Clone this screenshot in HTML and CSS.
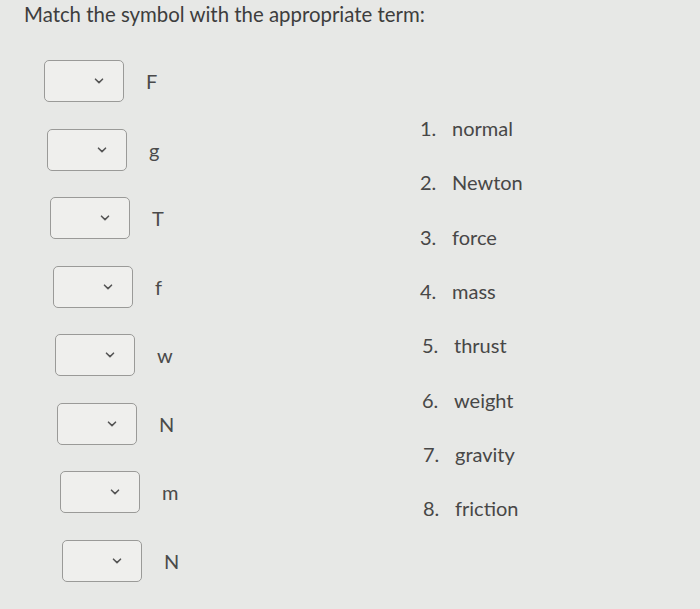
FILE: index.html
```html
<!DOCTYPE html>
<html>
<head>
<meta charset="utf-8">
<link rel="stylesheet" href="styles.css">
</head>
<body>
<div class="page">
  <h1 class="title">Match the symbol with the appropriate term:</h1>
  <div class="match">
    <div class="symbols">
      <div class="row"><div class="select"><svg class="chev" viewBox="0 0 10 6" width="10" height="6"><path d="M1.5 1.2 L5 4.6 L8.5 1.2" fill="none" stroke="#555" stroke-width="1.6" stroke-linecap="round" stroke-linejoin="round"/></svg></div><span class="sym">F</span></div>
      <div class="row"><div class="select"><svg class="chev" viewBox="0 0 10 6" width="10" height="6"><path d="M1.5 1.2 L5 4.6 L8.5 1.2" fill="none" stroke="#555" stroke-width="1.6" stroke-linecap="round" stroke-linejoin="round"/></svg></div><span class="sym">g</span></div>
      <div class="row"><div class="select"><svg class="chev" viewBox="0 0 10 6" width="10" height="6"><path d="M1.5 1.2 L5 4.6 L8.5 1.2" fill="none" stroke="#555" stroke-width="1.6" stroke-linecap="round" stroke-linejoin="round"/></svg></div><span class="sym">T</span></div>
      <div class="row"><div class="select"><svg class="chev" viewBox="0 0 10 6" width="10" height="6"><path d="M1.5 1.2 L5 4.6 L8.5 1.2" fill="none" stroke="#555" stroke-width="1.6" stroke-linecap="round" stroke-linejoin="round"/></svg></div><span class="sym">f</span></div>
      <div class="row"><div class="select"><svg class="chev" viewBox="0 0 10 6" width="10" height="6"><path d="M1.5 1.2 L5 4.6 L8.5 1.2" fill="none" stroke="#555" stroke-width="1.6" stroke-linecap="round" stroke-linejoin="round"/></svg></div><span class="sym">w</span></div>
      <div class="row"><div class="select"><svg class="chev" viewBox="0 0 10 6" width="10" height="6"><path d="M1.5 1.2 L5 4.6 L8.5 1.2" fill="none" stroke="#555" stroke-width="1.6" stroke-linecap="round" stroke-linejoin="round"/></svg></div><span class="sym">N</span></div>
      <div class="row"><div class="select"><svg class="chev" viewBox="0 0 10 6" width="10" height="6"><path d="M1.5 1.2 L5 4.6 L8.5 1.2" fill="none" stroke="#555" stroke-width="1.6" stroke-linecap="round" stroke-linejoin="round"/></svg></div><span class="sym">m</span></div>
      <div class="row"><div class="select"><svg class="chev" viewBox="0 0 10 6" width="10" height="6"><path d="M1.5 1.2 L5 4.6 L8.5 1.2" fill="none" stroke="#555" stroke-width="1.6" stroke-linecap="round" stroke-linejoin="round"/></svg></div><span class="sym">N</span></div>
    </div>
    <ol class="terms">
      <li><span class="num">1.</span><span>normal</span></li>
      <li><span class="num">2.</span><span>Newton</span></li>
      <li><span class="num">3.</span><span>force</span></li>
      <li><span class="num">4.</span><span>mass</span></li>
      <li><span class="num">5.</span><span>thrust</span></li>
      <li><span class="num">6.</span><span>weight</span></li>
      <li><span class="num">7.</span><span>gravity</span></li>
      <li><span class="num">8.</span><span>friction</span></li>
    </ol>
  </div>
</div>
</body>
</html>
```

FILE: styles.css
```css
html, body {
  margin: 0;
  padding: 0;
}
body {
  width: 700px;
  height: 609px;
  overflow: hidden;
  background: #e7e8e6;
  font-family: Lato, "Open Sans", sans-serif;
  color: #454545;
}
.page {
  padding: 0 0 0 24px;
}
.title {
  margin: 0;
  padding-top: 1px;
  font-size: 20.4px;
  font-weight: 400;
  line-height: 26px;
  color: #3d3d3d;
}
.match {
  display: flex;
  align-items: flex-start;
}
.symbols {
  display: flex;
  flex-direction: column;
  gap: 26.5px;
  padding-top: 33px;
  width: 396px;
}
.row {
  display: flex;
  align-items: center;
  gap: 22px;
  height: 42px;
}
.row:nth-child(1) { margin-left: 20px; }
.row:nth-child(2) { margin-left: 23px; }
.row:nth-child(3) { margin-left: 26px; }
.row:nth-child(4) { margin-left: 29px; }
.row:nth-child(5) { margin-left: 31px; }
.row:nth-child(6) { margin-left: 33px; }
.row:nth-child(7) { margin-left: 36px; }
.row:nth-child(8) { margin-left: 38px; }
.select {
  box-sizing: border-box;
  width: 80px;
  height: 42px;
  border: 1.5px solid #9a9a98;
  border-radius: 5px;
  background: #efefed;
  display: flex;
  align-items: center;
  padding-left: 49px;
}
.sym {
  font-size: 20px;
  color: #4a4a4a;
}
.terms {
  list-style: none;
  margin: 0;
  padding: 74px 0 0 0;
}
.terms li {
  display: flex;
  height: 54.3px;
  align-items: center;
  font-size: 20px;
  color: #474747;
}
.num {
  width: 32px;
}
.terms li:nth-child(n+5) { margin-left: 2px; }
.terms li:nth-child(n+7) { margin-left: 3px; }
```
